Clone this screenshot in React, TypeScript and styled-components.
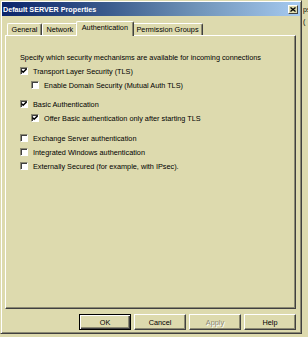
import React from "react";
import styled, { createGlobalStyle } from "styled-components";

const FACE = "#dddaae";
const SHADOW = "#8c8a72";
const DARK = "#404040";

const GlobalStyle = createGlobalStyle`
  html, body {
    margin: 0;
    padding: 0;
    background: ${FACE};
    width: 308px;
    height: 337px;
    overflow: hidden;
    font-family: "Liberation Sans", Arial, sans-serif;
  }
`;

const Desktop = styled.div`
  position: relative;
  width: 308px;
  height: 337px;
`;

// the edge of another window peeking out behind the dialog
const BehindWindow = styled.div`
  position: absolute;
  left: 303px;
  top: 0;
  width: 5px;
  height: 337px;
  overflow: hidden;
  font-size: 7px;
  line-height: 12px;
  color: #000;
  padding-top: 4px;
  box-sizing: border-box;
  white-space: nowrap;
`;

const Window = styled.div`
  position: relative;
  width: 302px;
  height: 334px;
  box-sizing: border-box;
  border-top: 1px solid ${FACE};
  border-left: 1px solid ${FACE};
  border-right: 1px solid ${DARK};
  border-bottom: 1px solid ${DARK};
  box-shadow: inset 1px 1px 0 #fff, inset -1px -1px 0 ${SHADOW};
  background: ${FACE};
  padding: 1px;
  display: flex;
  flex-direction: column;
`;

const TitleBar = styled.div`
  height: 14px;
  display: flex;
  align-items: center;
  justify-content: space-between;
  padding: 0 2px 0 1px;
  background: linear-gradient(90deg, #0a246a 0%, #3a5a8c 35%, #6f93b8 65%, #a6caf0 100%);
`;

const Title = styled.span`
  color: #fff;
  font-weight: bold;
  font-size: 7.2px;
`;

const CloseButton = styled.div`
  width: 10px;
  height: 9px;
  box-sizing: border-box;
  background: ${FACE};
  border-top: 1px solid #fff;
  border-left: 1px solid #fff;
  border-right: 1px solid ${DARK};
  border-bottom: 1px solid ${DARK};
  display: flex;
  align-items: center;
  justify-content: center;
`;

const Body = styled.div`
  flex: 1;
  display: flex;
  flex-direction: column;
  padding: 3px 4px 0 3px;
`;

const TabStrip = styled.div`
  display: flex;
  align-items: flex-end;
  height: 16px;
  padding-left: 2px;
  position: relative;
  z-index: 1;
`;

const Tab = styled.div<{ $active?: boolean }>`
  box-sizing: border-box;
  height: ${(p) => (p.$active ? "15px" : "12px")};
  margin: ${(p) => (p.$active ? "0 -2px -1px -2px" : "0")};
  padding: ${(p) => (p.$active ? "1px 5px 0 5px" : "1px 3.5px 0 3.5px")};
  border-top: 1px solid #fff;
  border-left: 1px solid #fff;
  border-right: 1px solid ${DARK};
  box-shadow: inset -1px 0 0 ${SHADOW};
  border-radius: 2px 2px 0 0;
  background: ${FACE};
  font-size: 7.3px;
  line-height: 10px;
  color: #000;
  white-space: nowrap;
  position: relative;
  z-index: ${(p) => (p.$active ? 2 : 1)};
`;

const Panel = styled.div`
  height: 274px;
  box-sizing: border-box;
  border-top: 1px solid #fff;
  border-left: 1px solid #fff;
  border-right: 1px solid ${DARK};
  border-bottom: 1px solid ${DARK};
  box-shadow: inset -1px -1px 0 ${SHADOW};
  padding: 17px 0 0 14px;
  display: flex;
  flex-direction: column;
`;

const Intro = styled.div`
  font-size: 7.3px;
  line-height: 10px;
  color: #000;
  white-space: nowrap;
  margin-bottom: 1px;
`;

const Row = styled.label<{ $indent?: boolean; $gap?: number }>`
  display: flex;
  align-items: center;
  height: 14px;
  margin-left: ${(p) => (p.$indent ? "11px" : "0")};
  margin-top: ${(p) => p.$gap ?? 0}px;
  font-size: 7.3px;
  color: #000;
  white-space: nowrap;
`;

const Box = styled.span`
  width: 8px;
  height: 8px;
  box-sizing: border-box;
  background: #fff;
  border-top: 1px solid ${SHADOW};
  border-left: 1px solid ${SHADOW};
  border-right: 1px solid #fff;
  border-bottom: 1px solid #fff;
  box-shadow: inset 1px 1px 0 ${DARK};
  margin-right: 5px;
  display: flex;
  align-items: center;
  justify-content: center;
  flex-shrink: 0;
`;

const ButtonRow = styled.div`
  display: flex;
  justify-content: flex-end;
  gap: 3px;
  margin-top: 5px;
`;

const Button = styled.div<{ $default?: boolean; $disabled?: boolean }>`
  width: 52px;
  height: 16px;
  box-sizing: border-box;
  display: flex;
  align-items: center;
  justify-content: center;
  background: ${FACE};
  font-size: 7.3px;
  color: ${(p) => (p.$disabled ? SHADOW : "#000")};
  text-shadow: ${(p) => (p.$disabled ? "1px 1px 0 #fff" : "none")};
  border: 1px solid;
  border-color: ${(p) => (p.$default ? "#000" : `#fff ${DARK} ${DARK} #fff`)};
  box-shadow: ${(p) =>
    p.$default
      ? `inset 1px 1px 0 #fff, inset -1px -1px 0 ${DARK}, inset -2px -2px 0 ${SHADOW}`
      : `inset -1px -1px 0 ${SHADOW}`};
`;

const Check: React.FC = () => (
  <svg width="6" height="6" viewBox="0 0 7 7">
    <path d="M0.5 3 L2.5 5 L6.5 1" stroke="#000" strokeWidth="1.6" fill="none" />
  </svg>
);

const CheckRow: React.FC<{
  label: string;
  checked?: boolean;
  indent?: boolean;
  gap?: number;
}> = ({ label, checked, indent, gap }) => (
  <Row $indent={indent} $gap={gap}>
    <Box>{checked && <Check />}</Box>
    {label}
  </Row>
);

const App: React.FC = () => {
  return (
    <Desktop>
      <GlobalStyle />
      <BehindWindow>
        <div>ps</div>
        <div>(</div>
      </BehindWindow>
      <Window>
        <TitleBar>
          <Title>Default SERVER Properties</Title>
          <CloseButton>
            <svg width="6" height="5" viewBox="0 0 6 5">
              <path d="M0.5 0.5 L5.5 4.5 M5.5 0.5 L0.5 4.5" stroke="#000" strokeWidth="1.3" />
            </svg>
          </CloseButton>
        </TitleBar>
        <Body>
          <TabStrip>
            <Tab>General</Tab>
            <Tab>Network</Tab>
            <Tab $active>Authentication</Tab>
            <Tab>Permission Groups</Tab>
          </TabStrip>
          <Panel>
            <Intro>Specify which security mechanisms are available for incoming connections</Intro>
            <CheckRow label="Transport Layer Security (TLS)" checked />
            <CheckRow label="Enable Domain Security (Mutual Auth TLS)" indent />
            <CheckRow label="Basic Authentication" checked gap={5} />
            <CheckRow label="Offer Basic authentication only after starting TLS" checked indent />
            <CheckRow label="Exchange Server authentication" gap={6} />
            <CheckRow label="Integrated Windows authentication" />
            <CheckRow label="Externally Secured (for example, with IPsec)." />
          </Panel>
          <ButtonRow>
            <Button $default>OK</Button>
            <Button>Cancel</Button>
            <Button $disabled>Apply</Button>
            <Button>Help</Button>
          </ButtonRow>
        </Body>
      </Window>
    </Desktop>
  );
};

export default App;
